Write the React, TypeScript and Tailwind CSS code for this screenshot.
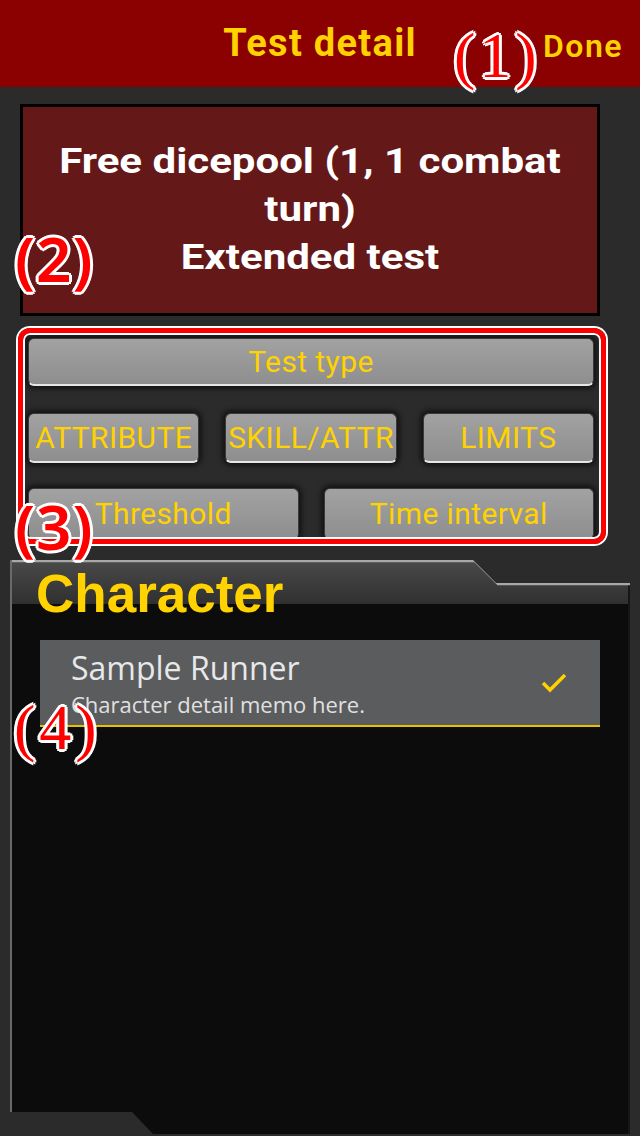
import React from "react";

const outline =
  "[text-shadow:3px_0_0_#fff,-3px_0_0_#fff,0_3px_0_#fff,0_-3px_0_#fff,2px_2px_0_#fff,-2px_2px_0_#fff,2px_-2px_0_#fff,-2px_-2px_0_#fff]";

function Btn({ label }: { label: string }) {
  return (
    <div className="flex items-center justify-center overflow-visible whitespace-nowrap rounded-[6px] border border-[#3a3a3a] border-b-2 border-b-[#e6e6e6] bg-[linear-gradient(to_bottom,#a2a2a2,#8e8e8e)] text-[30px] tracking-[0.4px] text-[#ffd200] shadow-[0_0_5px_3px_rgba(0,0,0,0.55)] [font-family:Roboto,sans-serif]">
      {label}
    </div>
  );
}

export default function App() {
  return (
    <div className="relative flex h-[1136px] w-[640px] flex-col overflow-hidden bg-[#2b2b2b] [font-family:Roboto,sans-serif]">
      {/* header */}
      <div className="grid h-[87px] shrink-0 grid-cols-[1fr_auto_1fr] items-center bg-[#8b0000]">
        <div />
        <div className="text-[38px] font-bold tracking-[1.3px] text-[#ffd200]">Test detail</div>
        <div className="flex justify-end pr-[17px] pt-[4px] text-[32px] font-semibold tracking-[1.5px] text-[#ffd200]">Done</div>
      </div>

      {/* red info box */}
      <div className="ml-[20px] mt-[17px] flex h-[212px] w-[580px] shrink-0 flex-col items-center justify-center border-[3px] border-black bg-[#651818] text-white">
        <div className="w-[478px] scale-x-[1.2] text-center text-[35px] font-bold leading-[48px]">
          <div>Free dicepool (1, 1 combat turn)</div>
          <div>Extended test</div>
        </div>
      </div>

      {/* button group */}
      <div className="relative ml-[18px] mt-[12px] h-[216px] w-[588px] shrink-0">
        <div className="h-full overflow-hidden rounded-[12px] pl-[10px] pr-[12px] pt-[10px]">
          <div className="grid h-[48px]">
            <Btn label="Test type" />
          </div>
          <div className="mt-[27px] grid h-[50px] grid-cols-3 gap-[26px]">
            <Btn label="ATTRIBUTE" />
            <Btn label="SKILL/ATTR" />
            <Btn label="LIMITS" />
          </div>
          <div className="mt-[25px] grid h-[52px] grid-cols-2 gap-[25px]">
            <Btn label="Threshold" />
            <Btn label="Time interval" />
          </div>
        </div>
        <div className="pointer-events-none absolute inset-0 rounded-[12px] border-[5px] border-[#ff0000] shadow-[0_0_0_2px_#fff,inset_0_0_0_2px_#fff]" />
      </div>

      {/* character panel */}
      <div className="relative ml-[10px] mt-[16px] w-[620px] flex-1 border-l-2 border-r-2 border-l-[#6a6a6a] border-r-[#161616] bg-[linear-gradient(to_bottom,#4a4a4a_0px,#303030_44px,#0c0c0c_44px)] [clip-path:polygon(0_0,463px_0,486px_23px,620px_23px,620px_574px,143px_574px,122px_552px,0_552px)]">
        <svg className="pointer-events-none absolute left-0 top-0" width="620" height="26" viewBox="0 0 620 26">
          <polyline points="0,1 463,1 486,24 618,24" fill="none" stroke="#a8a8a8" strokeWidth="2.5" />
        </svg>
        <div className="pl-[24px] pt-[4px] text-[53px] font-bold leading-[60px] text-[#ffd200] [font-family:'Liberation_Sans',Arial,sans-serif]">
          Character
        </div>
        <div className="ml-[28px] mt-[16px] flex h-[87px] w-[560px] items-center border-b-2 border-b-[#e8c000] bg-[#5b5c5e] pl-[31px] pr-[33px]">
          <div className="flex-1 [font-family:'Open_Sans',sans-serif]">
            <div className="text-[32px] leading-[42px] text-[#e8e8e8]">Sample Runner</div>
            <div className="text-[22px] leading-[30px] text-[#e0e0e0]">Character detail memo here.</div>
          </div>
          <svg width="26" height="22" viewBox="0 0 26 22">
            <polyline points="2,11 9,18 24,3" fill="none" stroke="#ffd200" strokeWidth="3.5" />
          </svg>
        </div>
      </div>

      {/* annotations */}
      <div className={`pointer-events-none absolute left-[454px] top-[20px] text-[64px] leading-[72px] tracking-[4px] text-[#ff0000] [font-family:'Liberation_Serif',serif] ${outline}`}>
        (1)
      </div>
      <div className={`pointer-events-none absolute left-[15px] top-[222px] text-[62px] font-semibold leading-[72px] tracking-[1px] text-[#ff0000] [font-family:'Noto_Sans',sans-serif] ${outline}`}>
        (2)
      </div>
      <div className={`pointer-events-none absolute left-[15px] top-[490px] text-[62px] font-semibold leading-[72px] tracking-[1px] text-[#ff0000] [font-family:'Noto_Sans',sans-serif] ${outline}`}>
        (3)
      </div>
      <div className={`pointer-events-none absolute left-[14px] top-[692px] text-[64px] leading-[72px] tracking-[4px] text-[#ff0000] [font-family:'Liberation_Serif',serif] ${outline}`}>
        (4)
      </div>
    </div>
  );
}
